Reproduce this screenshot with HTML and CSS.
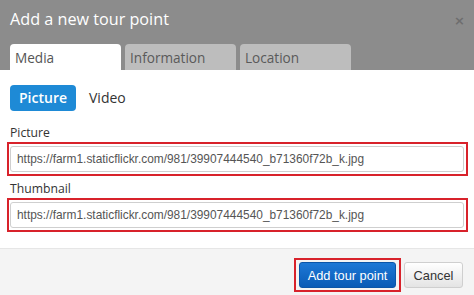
FILE: index.html
```html
<!DOCTYPE html>
<html>
<head>
<meta charset="utf-8">
<link rel="stylesheet" href="styles.css">
</head>
<body>
<div class="dialog">
  <div class="header">
    <div class="title-row">
      <span class="title">Add a new tour point</span>
      <span class="close">×</span>
    </div>
    <div class="tabs">
      <div class="tab active">Media</div>
      <div class="tab">Information</div>
      <div class="tab">Location</div>
    </div>
  </div>
  <div class="body">
    <div class="pills">
      <span class="pill active">Picture</span>
      <span class="pill">Video</span>
    </div>
    <div class="label first">Picture</div>
    <div class="highlight">
      <div class="input">https://farm1.staticflickr.com/981/39907444540_b71360f72b_k.jpg</div>
    </div>
    <div class="label">Thumbnail</div>
    <div class="highlight">
      <div class="input">https://farm1.staticflickr.com/981/39907444540_b71360f72b_k.jpg</div>
    </div>
  </div>
  <div class="footer">
    <div class="highlight-btn"><button class="btn primary">Add tour point</button></div>
    <button class="btn default">Cancel</button>
  </div>
</div>
</body>
</html>
```
FILE: styles.css
```css
* { box-sizing: border-box; }
html, body { margin: 0; padding: 0; }
body { width: 474px; height: 295px; overflow: hidden; background: #fff; font-family: "Open Sans", sans-serif; }
.dialog { display: flex; flex-direction: column; height: 295px; }
.header { background: #8c8c8c; height: 70px; display: flex; flex-direction: column; }
.title-row { height: 44px; display: flex; justify-content: space-between; align-items: flex-start; padding: 6px 10px 0 10px; }
.title { color: #fff; font-size: 16.2px; line-height: 26px; }
.close { color: #6e6e6e; font-size: 13px; line-height: 18px; margin-top: 6px; margin-right: -1px; font-family: "DejaVu Sans", sans-serif; font-weight: bold; }
.tabs { display: flex; gap: 4px; padding-left: 10px; }
.tab { width: 111px; height: 26px; background: #bdbdbd; border-radius: 4px 4px 0 0; color: #5a5a5a; font-size: 13.6px; line-height: 28px; padding-left: 5px; }
.tab.active { background: #fff; color: #555; }
.body { padding: 15px 10px 0 10px; }
.pills { display: flex; align-items: center; height: 26px; }
.pill { font-size: 14px; color: #333; height: 26px; line-height: 26px; padding: 0 9px; margin-right: 4px; }
.pill.active { background: #1e8ad6; color: #fff; font-weight: 600; border-radius: 4px; }
.label { font-size: 12.2px; color: #333; line-height: 18px; margin-top: 4px; }
.label.first { margin-top: 13px; }
.highlight { margin: 0 -4px 0 -3px; border: 2px solid #d8222b; padding: 2px 2px 2px 1px; }
.input { height: 26px; border: 1px solid #cfcfcf; border-radius: 3px; font-family: "Liberation Sans", Arial, sans-serif; font-size: 11.9px; color: #555; line-height: 24px; padding-left: 6px; white-space: nowrap; overflow: hidden; }
.footer { margin-top: 16px; flex: 1; border-top: 1px solid #e6e6e6; background: #f4f4f4; display: flex; justify-content: flex-end; align-items: flex-start; padding: 9px 11px 0 0; gap: 3px; }
.highlight-btn { border: 2px solid #d8222b; padding: 2px 3px; display: flex; }
.btn { height: 26px; font-family: "Liberation Sans", Arial, sans-serif; font-size: 12.8px; border-radius: 3px; margin: 0; padding: 0; }
.btn.primary { width: 97px; color: #fff; border: 1px solid #0b55a8; background: linear-gradient(#1d78d6, #0a5bb6); }
.btn.default { width: 59px; margin-top: 4px; color: #333; border: 1px solid #cfcfcf; background: linear-gradient(#ffffff, #e4e4e4); }
```
